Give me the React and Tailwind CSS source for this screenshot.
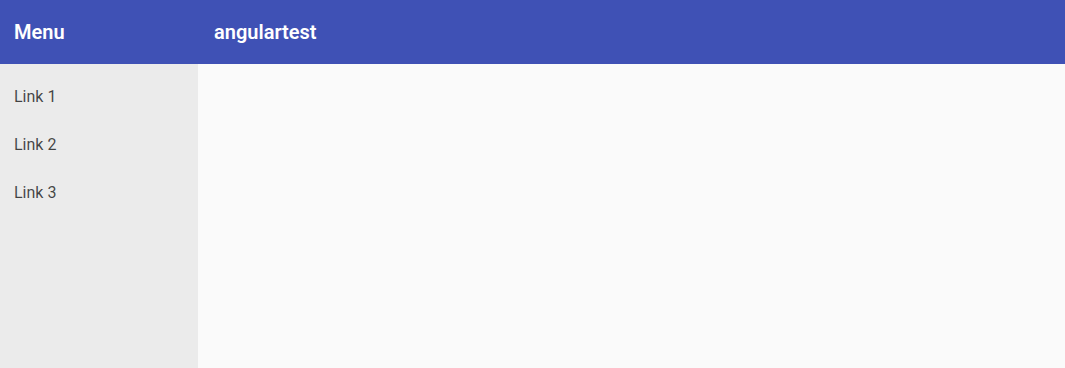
import React from 'react';

const links = ['Link 1', 'Link 2', 'Link 3'];

const App = () => {
    return (
        <div className="h-screen flex font-['Roboto',sans-serif] bg-[#fafafa]">
            {/* Sidenav */}
            <aside className="w-[198px] shrink-0 flex flex-col bg-[#ebebeb]">
                <div className="h-16 px-[14px] flex items-center bg-[#3f51b5] text-white text-xl font-semibold">
                    Menu
                </div>
                <nav className="pt-[9px]">
                    {links.map((l) => (
                        <a key={l} href="#" className="h-12 px-[14px] flex items-center text-base text-[rgba(0,0,0,0.72)]">
                            {l}
                        </a>
                    ))}
                </nav>
            </aside>

            {/* Content */}
            <div className="flex-1 flex flex-col">
                <div className="h-16 px-4 flex items-center bg-[#3f51b5] text-white text-xl font-semibold">
                    angulartest
                </div>
                <main className="flex-1" />
            </div>
        </div>
    );
};

export default App;
